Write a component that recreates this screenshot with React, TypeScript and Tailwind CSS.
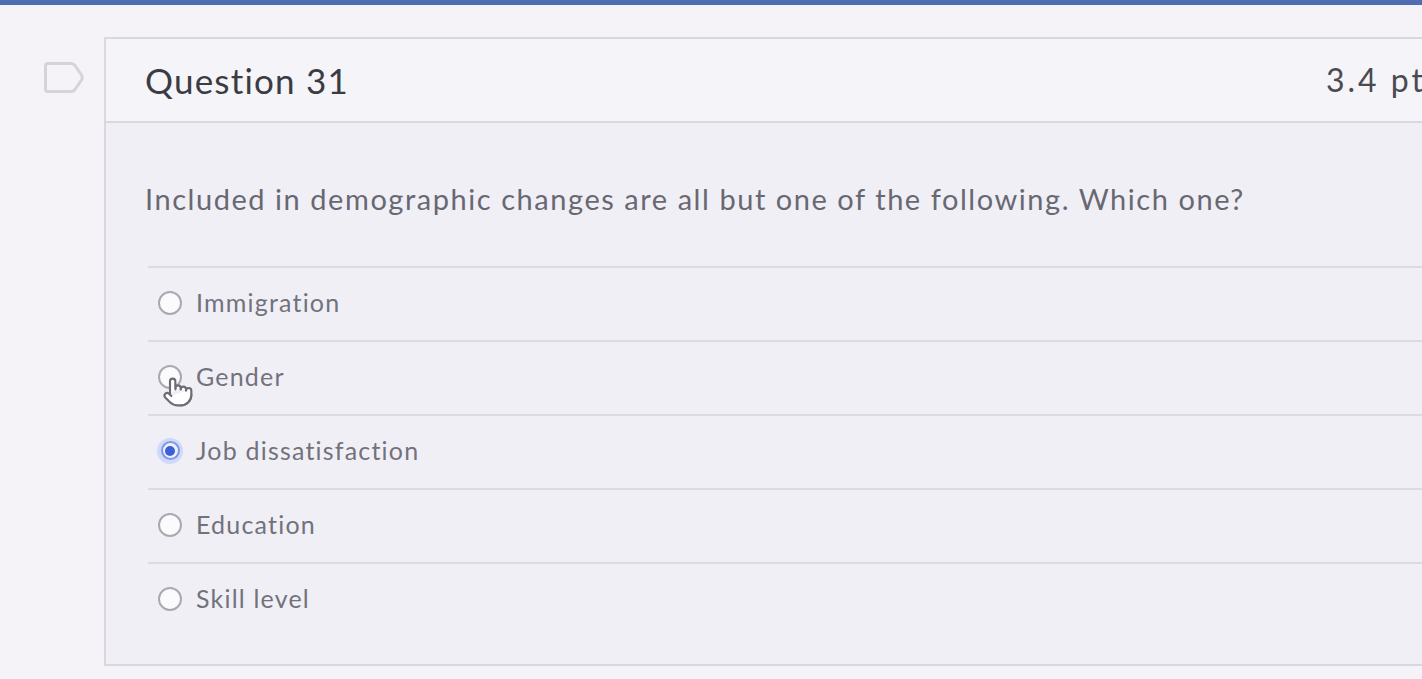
import React from 'react';
import { Pointer } from 'lucide-react';

interface Answer {
  label: string;
  checked?: boolean;
}

const answers: Answer[] = [
  { label: 'Immigration' },
  { label: 'Gender' },
  { label: 'Job dissatisfaction', checked: true },
  { label: 'Education' },
  { label: 'Skill level' },
];

const Radio: React.FC<{ checked?: boolean }> = ({ checked }) =>
  checked ? (
    <span className="w-[26px] h-[26px] rounded-full bg-[#cfd9fb] flex items-center justify-center shrink-0">
      <span className="w-[19px] h-[19px] rounded-full bg-[#eef1fd] border-[2px] border-[#7e97e6] flex items-center justify-center">
        <span className="w-[10px] h-[10px] rounded-full bg-[#3a5fd8]" />
      </span>
    </span>
  ) : (
    <span className="w-[26px] h-[26px] flex items-center justify-center shrink-0">
      <span className="w-[24px] h-[24px] rounded-full bg-[#fbfbfd] border-[2px] border-[#a9a9b0]" />
    </span>
  );

export default function App() {
  return (
    <div className="w-[1422px] h-[679px] overflow-hidden bg-[#f5f3f8] font-['Lato','Liberation_Sans',sans-serif]">
      <div className="h-[5px] bg-[#4f6cb2]" />

      <div className="flex pt-[32px]">
        {/* Flag column */}
        <div className="w-[104px] shrink-0 pt-[24px] pl-[43px]">
          <svg width="42" height="33" viewBox="0 0 42 33" fill="none">
            <path
              d="M5 2.5 H28 Q30.5 2.5 32 4.5 L38.5 14 Q40 16.5 38.5 19 L32 28.5 Q30.5 30.5 28 30.5 H5 Q2.5 30.5 2.5 28 V5 Q2.5 2.5 5 2.5 Z"
              stroke="#d4d3da"
              strokeWidth="3"
            />
          </svg>
        </div>

        {/* Question card */}
        <div className="w-[1360px] shrink-0 border-l-[2px] border-t-[2px] border-b-[2px] border-[#d9d8de] bg-[#f0eff6]">
          <div className="h-[84px] flex items-center justify-between pl-[39px] bg-[#f5f4f8] border-b-[2px] border-[#d9d8de]">
            <span className="text-[35px] text-[#3b3b43] tracking-[1.2px]">Question 31</span>
            <span className="w-[138px] shrink-0 text-[32px] text-[#4a4a52] tracking-[3px] whitespace-nowrap">3.4 pts</span>
          </div>

          <div className="pl-[39px] pt-[58px] pb-[28px]">
            <p className="text-[29px] leading-[36px] text-[#686872] tracking-[1.55px]">
              Included in demographic changes are all but one of the following. Which one?
            </p>

            <div className="mt-[49px] ml-[3px]">
              {answers.map((a) => (
                <div
                  key={a.label}
                  className="relative h-[74px] border-t-[2px] border-[#dcdbe2] flex items-center gap-[13px] pl-[9px] pb-[3px]"
                >
                  <Radio checked={a.checked} />
                  <span className="text-[25px] text-[#72727c] tracking-[1.2px]">{a.label}</span>
                  {a.label === 'Gender' && (
                    <Pointer
                      size={32}
                      strokeWidth={1.6}
                      className="absolute left-[14px] top-[34px] text-[#6c6c74] fill-white"
                    />
                  )}
                </div>
              ))}
            </div>
          </div>
        </div>
      </div>
    </div>
  );
}
